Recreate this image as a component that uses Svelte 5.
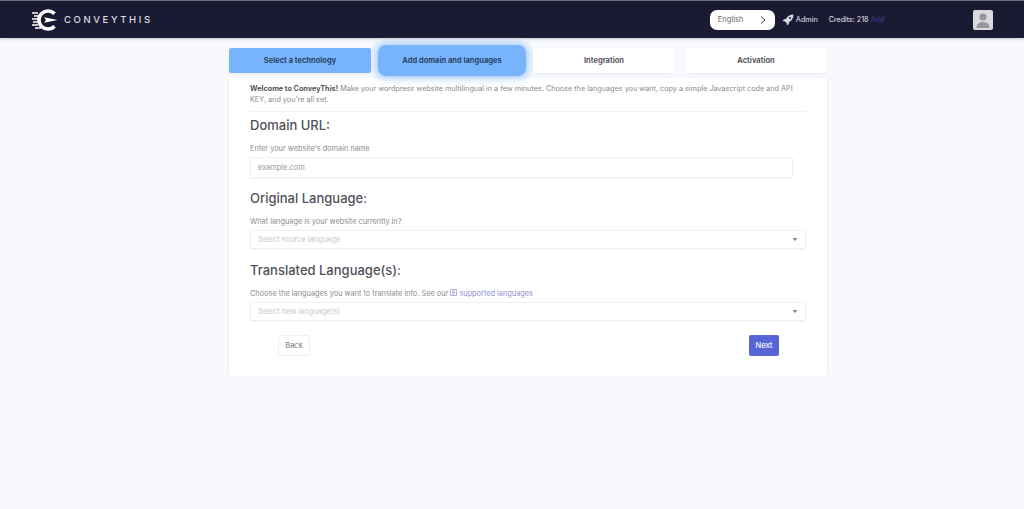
<script>
  const steps = [
    { label: 'Select a technology', state: 'done' },
    { label: 'Add domain and languages', state: 'active' },
    { label: 'Integration', state: '' },
    { label: 'Activation', state: '' }
  ];
</script>

<header class="topbar">
  <div class="brand">
    <svg class="logo" width="26" height="22" viewBox="0 0 26 22" aria-hidden="true">
      <path d="M22.500 4.800 A9 9 0 1 0 22.500 17.200" fill="none" stroke="#fff" stroke-width="3.600" />
      <path d="M12 8.200 L25.500 11 L12 13.800 L14 11 Z" fill="#fff" />
      <path d="M0 4h6M2 7h5M0 10h6M1 13h5M0 16h6M3 19h6" stroke="#fff" stroke-width="1.500" fill="none" />
    </svg>
    <span class="brand-name">CONVEYTHIS</span>
  </div>
  <div class="top-right">
    <button type="button" class="lang">
      <span>English</span>
      <svg width="6" height="8" viewBox="0 0 6 8" aria-hidden="true"><path d="M1 .5 5 4 1 7.5" fill="none" stroke="#444" stroke-width="1" /></svg>
    </button>
    <svg class="rocket" width="12" height="12" viewBox="0 0 12 12" aria-hidden="true">
      <path d="M11.500.5C8 .5 5.500 2 3.800 5L2 5.200.5 7l2.200.3 2 2L5 11.500l1.800-1.500.2-1.800c3-1.700 4.500-4.200 4.500-7.700Z" fill="#d8d8e0" />
      <circle cx="8" cy="4" r="1" fill="#1b1a33" />
    </svg>
    <span class="admin">Admin</span>
    <span class="credits">Credits: 218 <span class="add">Add</span></span>
    <div class="avatar">
      <svg width="20" height="20" viewBox="0 0 20 20" aria-hidden="true">
        <circle cx="10" cy="7" r="3.600" fill="#97979e" />
        <path d="M3.500 18c0-4 2.500-6 6.500-6s6.500 2 6.500 6Z" fill="#97979e" />
      </svg>
    </div>
  </div>
</header>

<main class="page">
  <div class="wrap">
    <nav class="steps">
      {#each steps as step}
        <div class="step {step.state}">{step.label}</div>
      {/each}
    </nav>

    <section class="card">
      <p class="intro">
        <strong>Welcome to ConveyThis!</strong> Make your wordpress website multilingual in a few minutes. Choose the languages you want, copy a simple Javascript code and API KEY, and you're all set.
      </p>
      <hr />

      <h2>Domain URL:</h2>
      <div class="hint">Enter your website's domain name</div>
      <div class="field field-url">example.com</div>

      <h2>Original Language:</h2>
      <div class="hint">What language is your website currently in?</div>
      <div class="field select"><span class="placeholder">Select source language</span><i class="caret"></i></div>

      <h2>Translated Language(s):</h2>
      <div class="hint">
        Choose the languages you want to translate into. See our
        <span class="link">
          <svg width="7" height="7" viewBox="0 0 7 7" aria-hidden="true"><path d="M.5.500h6v6h-6ZM2 2h3M2 3.500h3M2 5h3" fill="none" stroke="#8f8bcf" stroke-width=".7" /></svg>
          supported languages
        </span>
      </div>
      <div class="field select"><span class="placeholder">Select new language(s)</span><i class="caret"></i></div>

      <div class="actions">
        <button type="button" class="btn back">Back</button>
        <button type="button" class="btn next">Next</button>
      </div>
    </section>
  </div>
</main>

<style>
  :global(body) {
    background: #f8f9fc;
    font-family: Inter, "Liberation Sans", sans-serif;
    color: #666;
  }

  .topbar {
    box-sizing: border-box;
    height: 38px;
    display: flex;
    align-items: center;
    justify-content: space-between;
    padding: 0 31px 0 32px;
    background: #1b1a33;
    border-top: 1px solid #6d6d7c;
    box-shadow: 0 1px 3px rgba(0, 0, 0, 0.2);
  }

  .brand {
    display: flex;
    align-items: center;
    gap: 6px;
  }

  .brand-name {
    color: #dcdce4;
    font-size: 9.500px;
    font-weight: 500;
    letter-spacing: 2.600px;
  }

  .top-right {
    display: flex;
    align-items: center;
  }

  .lang {
    box-sizing: border-box;
    width: 65px;
    height: 20px;
    display: flex;
    align-items: center;
    justify-content: space-between;
    padding: 0 9px 0 8px;
    border: 0;
    border-radius: 7px;
    background: #fff;
    color: #666;
    font: 400 7.500px Inter, sans-serif;
  }

  .rocket {
    margin-left: 7px;
  }

  .admin {
    margin-left: 2px;
    color: #e8e8ee;
    font-size: 7.300px;
  }

  .credits {
    margin-left: 11px;
    color: #e8e8ee;
    font-size: 7.100px;
  }

  .add {
    color: #3f3f9a;
  }

  .avatar {
    width: 20px;
    height: 20px;
    margin-left: 89px;
    border-radius: 2px;
    background: #d9d9de;
    overflow: hidden;
  }

  .wrap {
    width: 598px;
    margin-left: 229px;
    padding-top: 10px;
  }

  .steps {
    display: grid;
    grid-template-columns: repeat(4, 142px);
    justify-content: space-between;
  }

  .step {
    height: 25px;
    display: flex;
    align-items: center;
    justify-content: center;
    padding-bottom: 1px;
    box-sizing: border-box;
    border-radius: 2px;
    background: #fff;
    color: #5a5a62;
    font-size: 7.500px;
    font-weight: 700;
    box-shadow: 0 1px 3px rgba(60, 70, 110, 0.08);
  }

  .step.done,
  .step.active {
    background: #78b4fb;
    color: #2c4468;
  }

  .step.active {
    height: 31px;
    margin: -3px -3px;
    border-radius: 8px;
    box-shadow: 0 0 7px 3px rgba(120, 180, 251, 0.6);
  }

  .card {
    box-sizing: border-box;
    height: 298px;
    margin-top: 5px;
    padding: 5px 21px 0;
    background: #fff;
    border-radius: 2px;
    box-shadow: 0 1px 3px rgba(60, 70, 110, 0.12);
  }

  .intro {
    margin: 0;
    color: #8b8b8b;
    font-size: 7.250px;
    line-height: 11px;
  }

  .intro strong {
    color: #555;
  }

  hr {
    margin: 6px 0 0;
    border: 0;
    border-top: 1px solid #f0f0f2;
  }

  h2 {
    margin: 4px 0 0;
    color: #515159;
    font-size: 13px;
    font-weight: 500;
    line-height: 18px;
  }

  .hint {
    margin-top: 10px;
    height: 10px;
    color: #8b8b8b;
    font-size: 7.350px;
    line-height: 10px;
  }

  .link {
    color: #8f8bcf;
  }

  .field {
    box-sizing: border-box;
    height: 19px;
    margin-top: 3px;
    margin-bottom: 12px;
    display: flex;
    align-items: center;
    justify-content: space-between;
    padding: 0 8px 0 7px;
    border: 1px solid #f0f0f3;
    border-radius: 2px;
    box-shadow: 0 1px 2px rgba(60, 70, 110, 0.06);
    background: #fff;
    color: #999;
    font-size: 7.400px;
  }

  .field-url {
    width: 543px;
    height: 21px;
    margin-bottom: 11px;
  }

  .select {
    width: 556px;
  }

  .placeholder {
    color: #c9c9cf;
  }

  .caret {
    width: 0;
    height: 0;
    border-left: 2.500px solid transparent;
    border-right: 2.500px solid transparent;
    border-top: 3px solid #777;
  }

  .actions {
    display: flex;
    justify-content: space-between;
    margin-top: 14px;
    padding: 0 27px 0 28px;
  }

  .btn {
    height: 21px;
    padding: 0;
    border-radius: 2px;
    font: 400 7.500px Inter, sans-serif;
  }

  .back {
    width: 32px;
    border: 1px solid #f0f0f3;
    background: #fff;
    color: #777;
  }

  .next {
    width: 30px;
    border: 0;
    background: #5865d9;
    color: #e9ebff;
    font-weight: 600;
  }
</style>
